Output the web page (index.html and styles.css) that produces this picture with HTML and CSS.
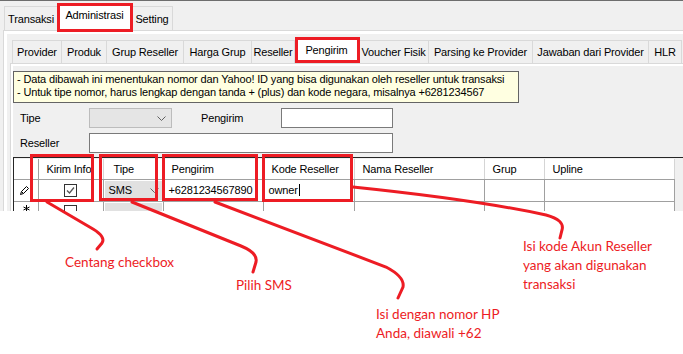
FILE: index.html
```html
<!DOCTYPE html>
<html lang="id">

<head>
  <meta charset="UTF-8" />
  <title>Pengirim</title>
  <link rel="stylesheet" href="styles.css">
</head>

<body>
  <div class="screen">
    <div class="window">
      <div class="tabs outer-tabs">
        <div class="tab tab-transaksi">Transaksi</div>
        <div class="tab active tab-admin">Administrasi</div>
        <div class="tab tab-setting">Setting</div>
      </div>

      <div class="outer-pane">
        <div class="page">
          <div class="tabs inner-tabs">
            <div class="tab tab-provider">Provider</div>
            <div class="tab tab-produk">Produk</div>
            <div class="tab tab-grup">Grup Reseller</div>
            <div class="tab tab-harga">Harga Grup</div>
            <div class="tab tab-reseller">Reseller</div>
            <div class="tab active tab-pengirim">Pengirim</div>
            <div class="tab tab-voucher">Voucher Fisik</div>
            <div class="tab tab-parsing">Parsing ke Provider</div>
            <div class="tab tab-jawaban">Jawaban dari Provider</div>
            <div class="tab tab-hlr">HLR</div>
          </div>

          <div class="inner-pane">
            <div class="inner-page">
              <div class="info">
                - Data dibawah ini menentukan nomor dan Yahoo! ID yang bisa digunakan oleh reseller untuk transaksi<br>
                - Untuk tipe nomor, harus lengkap dengan tanda + (plus) dan kode negara, misalnya +6281234567
              </div>

              <div class="form">
                <div class="form-row">
                  <label class="label">Tipe</label>
                  <div class="combo disabled">
                    <svg class="chevron" width="9" height="5" viewBox="0 0 9 5"><path d="M0.5 0.5 L4.5 4.5 L8.5 0.5" fill="none" stroke="#606060" /></svg>
                  </div>
                  <label class="label label-pengirim">Pengirim</label>
                  <div class="input input-short"></div>
                </div>
                <div class="form-row">
                  <label class="label">Reseller</label>
                  <div class="input input-long"></div>
                </div>
              </div>

              <div class="grid">
                <table>
                  <colgroup>
                    <col class="c-rowhead">
                    <col class="c-kirim">
                    <col class="c-tipe">
                    <col class="c-pengirim">
                    <col class="c-kode">
                    <col class="c-nama">
                    <col class="c-grup">
                    <col class="c-upline">
                  </colgroup>
                  <thead>
                    <tr>
                      <th class="rowhead"></th>
                      <th>Kirim Info</th>
                      <th class="th-tipe">Tipe</th>
                      <th>Pengirim</th>
                      <th>Kode Reseller</th>
                      <th>Nama Reseller</th>
                      <th>Grup</th>
                      <th>Upline</th>
                    </tr>
                  </thead>
                  <tbody>
                    <tr>
                      <td class="rowhead">
                        <svg class="pencil" width="11" height="11" viewBox="0 0 11 11"><path d="M1.5 9.5 L2.5 6.5 L7.5 1.5 L9.5 3.5 L4.5 8.5 Z M2.5 6.5 L4.5 8.5" fill="none" stroke="#000" /></svg>
                      </td>
                      <td class="center"><span class="check checked"><svg width="11" height="11" viewBox="0 0 11 11"><path d="M2 5.5 L4.5 8 L9 2.5" fill="none" stroke="#555" stroke-width="1.3" /></svg></span></td>
                      <td class="cell-combo"><div class="cell-select">SMS<svg class="chevron" width="9" height="5" viewBox="0 0 9 5"><path d="M0.5 0.5 L4.5 4.5 L8.5 0.5" fill="none" stroke="#606060" /></svg></div></td>
                      <td>+6281234567890</td>
                      <td><span class="caret">owner</span></td>
                      <td></td>
                      <td></td>
                      <td></td>
                    </tr>
                    <tr class="new-row">
                      <td class="rowhead">
                        <svg class="star" width="7" height="7" viewBox="0 0 7 7"><path d="M3.5 0 V7 M0.5 2 L6.5 5 M0.5 5 L6.5 2" stroke="#000" /></svg>
                      </td>
                      <td class="center"><span class="check"></span></td>
                      <td class="cell-combo"><div class="cell-select"></div></td>
                      <td></td>
                      <td></td>
                      <td></td>
                      <td></td>
                      <td></td>
                    </tr>
                  </tbody>
                </table>
              </div>
            </div>
          </div>
        </div>
      </div>
    </div>

    <svg class="marks" width="683" height="354" viewBox="0 0 683 354">
      <g fill="none" stroke="#ed1c24" stroke-width="3">
        <rect x="58.5" y="4.5" width="73" height="26" />
        <rect x="296.5" y="38.5" width="62" height="23" />
        <rect x="31.5" y="155.5" width="61" height="45" />
        <rect x="100.5" y="155.5" width="56" height="44" />
        <rect x="163.5" y="155.5" width="93" height="44" />
        <rect x="263.5" y="155.5" width="88" height="45" />
        <path d="M47 202 L93 229 Q106 237 102 243 L97 249" stroke-linecap="round" />
        <path d="M132 202 L241 246 Q258 253 256 262 L253 272" stroke-linecap="round" />
        <path d="M215 202 L386 267 Q405 277 403 287 L398 298" stroke-linecap="round" />
        <path d="M353 187 C430 195 500 205 546 215 Q565 220 562 230 L560 238" stroke-linecap="round" />
      </g>
    </svg>

    <div class="note note-centang">Centang checkbox</div>
    <div class="note note-sms">Pilih SMS</div>
    <div class="note note-nomor">Isi dengan nomor HP<br>Anda, diawali +62</div>
    <div class="note note-kode">Isi kode Akun Reseller<br>yang akan digunakan<br>transaksi</div>
  </div>
</body>

</html>
```

FILE: styles.css
```css
* {
  box-sizing: border-box;
}

html,
body {
  margin: 0;
  padding: 0;
  background: #fff;
}

body {
  font-family: "Liberation Sans", Arial, sans-serif;
  font-size: 11px;
  letter-spacing: -0.15px;
  color: #000;
}

.screen {
  position: relative;
  width: 683px;
  height: 354px;
  overflow: hidden;
}

.window {
  height: 211px;
  background: #f0f0f0;
  border-top: 1px solid #6d6d6d;
  overflow: hidden;
}

/* tab strips */

.tabs {
  display: flex;
  align-items: flex-end;
}

.tab {
  text-align: center;
  white-space: nowrap;
  line-height: 15px;
  border: 1px solid #d9d9d9;
  border-bottom: none;
  background: #f0f0f0;
}

.tab + .tab {
  border-left: none;
}

.tab.active {
  background: #fff;
}

.outer-tabs {
  height: 29px;
  padding-left: 4px;
}

.outer-tabs .tab {
  height: 24px;
  padding-top: 5px;
}

.outer-tabs .tab.active {
  height: 27px;
  padding-top: 4px;
}

.tab-transaksi { width: 54px; }
.tab-admin { width: 74px; }
.tab-setting { width: 41px; }

.outer-pane {
  margin-left: 3px;
  width: 700px;
  height: 200px;
  border: 1px solid #d9d9d9;
  background: #fff;
  padding: 3px;
}

.page {
  height: 100%;
  background: #f0f0f0;
  padding: 3px 0 0 3px;
  overflow: hidden;
}

.inner-tabs {
  height: 26px;
  padding-left: 2px;
}

.inner-tabs .tab {
  height: 23px;
  padding-top: 4px;
}

.inner-tabs .tab.active {
  height: 26px;
  padding-top: 5px;
}

.tab-provider { width: 50px; }
.tab-produk { width: 45px; }
.tab-grup { width: 77px; }
.tab-harga { width: 68px; }
.tab-reseller { width: 43px; }
.tab-pengirim { width: 64px; }
.tab-voucher { width: 70px; }
.tab-parsing { width: 104px; }
.tab-jawaban { width: 116px; }
.tab-hlr { width: 33px; }

.inner-pane {
  width: 700px;
  height: 160px;
  border: 1px solid #d9d9d9;
  background: #fff;
  padding: 2px;
}

.inner-page {
  height: 100%;
  background: #f0f0f0;
  padding-top: 5px;
}

/* info box */

.info {
  width: 506px;
  border: 1px solid #646464;
  background: #ffffe1;
  padding: 1px 3px 3px;
  line-height: 13px;
  white-space: nowrap;
}

/* filter form */

.form {
  padding: 5px 0 0 7px;
}

.form-row {
  display: flex;
  align-items: center;
  height: 20px;
}

.form-row + .form-row {
  margin-top: 5px;
}

.label {
  width: 69px;
}

.label-pengirim {
  width: 80px;
  margin-left: 29px;
}

.combo {
  width: 83px;
  height: 20px;
  border: 1px solid #bcbcbc;
  background: #e5e5e5;
  display: flex;
  align-items: center;
  justify-content: flex-end;
  padding-right: 5px;
}

.input {
  height: 20px;
  border: 1px solid #7a7a7a;
  background: #fff;
}

.input-short { width: 112px; }
.input-long { width: 304px; }

/* data grid */

.grid {
  margin-top: 4px;
  height: 60px;
  border-top: 1px solid #262626;
  border-left: 1px solid #262626;
  padding-top: 1px;
}

.grid table {
  border-collapse: collapse;
  table-layout: fixed;
  width: 660px;
}

.c-rowhead { width: 24px; }
.c-kirim { width: 65px; }
.c-tipe { width: 60px; }
.c-pengirim { width: 100px; }
.c-kode { width: 91px; }
.c-nama { width: 130px; }
.c-grup { width: 60px; }
.c-upline { width: 130px; }

.grid th {
  height: 20px;
  padding: 0 0 0 8px;
  text-align: left;
  font-weight: normal;
  background: #fff;
  border-right: 1px solid #d5d5d5;
  border-bottom: 1px solid #a0a0a0;
  white-space: nowrap;
  overflow: hidden;
}

.grid th.th-tipe {
  padding-left: 10px;
}

.grid td {
  height: 22px;
  padding: 0 0 0 5px;
  background: #fff;
  border-right: 1px solid #a0a0a0;
  border-bottom: 1px solid #a0a0a0;
  white-space: nowrap;
  overflow: hidden;
}

.grid .rowhead {
  padding: 0 0 0 5px;
  border-right: 1px solid #a0a0a0;
}

.grid td.center {
  padding: 0;
  text-align: center;
}

.pencil {
  display: block;
}

.new-row td {
  vertical-align: top;
}

.new-row .star {
  display: block;
  margin: 3px 0 0 4px;
}

.check {
  display: inline-block;
  width: 13px;
  height: 13px;
  border: 1px solid #333;
  background: #fff;
  vertical-align: middle;
}

.check svg {
  display: block;
}

.new-row .check {
  margin-top: 3px;
}

.grid td.cell-combo {
  padding: 0 1px 0 1px;
}

.cell-select {
  height: 19px;
  background: #e1e1e1;
  display: flex;
  align-items: center;
  justify-content: space-between;
  padding: 0 3px 0 4px;
}

.new-row .cell-select {
  margin-top: 1px;
}

.caret {
  border-right: 1px solid #000;
  padding-right: 1px;
}

/* annotation layer */

.marks {
  position: absolute;
  top: 0;
  left: 0;
  pointer-events: none;
}

.note {
  position: absolute;
  font-family: Lato, "Open Sans", sans-serif;
  font-size: 13.5px;
  line-height: 19px;
  letter-spacing: 0;
  color: #ed1c24;
  white-space: nowrap;
}

.note-centang { left: 65px; top: 253px; }
.note-sms { left: 236px; top: 276px; }
.note-nomor { left: 376px; top: 305px; }
.note-kode { left: 523px; top: 237px; }
```
